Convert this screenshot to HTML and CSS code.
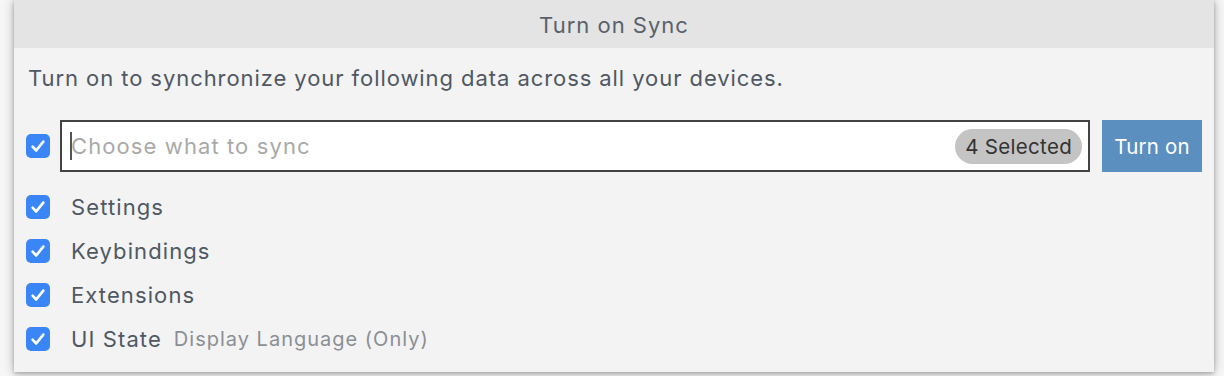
FILE: index.html
```html
<!DOCTYPE html>
<html>
<head>
<meta charset="utf-8">
<link rel="stylesheet" href="styles.css">
</head>
<body>
<div class="panel">
  <div class="title">Turn on Sync</div>
  <div class="content">
    <p class="desc">Turn on to synchronize your following data across all your devices.</p>
    <div class="picker">
      <span class="check"><svg viewBox="0 0 24 24" width="24" height="24"><path d="M6.6 12.6l3.6 3.9L17.3 7.6" fill="none" stroke="#fff" stroke-width="2.6" stroke-linecap="round" stroke-linejoin="round"/></svg></span>
      <div class="input">
        <span class="caret"></span>
        <span class="placeholder">Choose what to sync</span>
        <span class="badge">4 Selected</span>
      </div>
      <button class="btn">Turn on</button>
    </div>
    <ul class="list">
      <li class="item"><span class="check"><svg viewBox="0 0 24 24" width="24" height="24"><path d="M6.6 12.6l3.6 3.9L17.3 7.6" fill="none" stroke="#fff" stroke-width="2.6" stroke-linecap="round" stroke-linejoin="round"/></svg></span><span class="label">Settings</span></li>
      <li class="item"><span class="check"><svg viewBox="0 0 24 24" width="24" height="24"><path d="M6.6 12.6l3.6 3.9L17.3 7.6" fill="none" stroke="#fff" stroke-width="2.6" stroke-linecap="round" stroke-linejoin="round"/></svg></span><span class="label">Keybindings</span></li>
      <li class="item"><span class="check"><svg viewBox="0 0 24 24" width="24" height="24"><path d="M6.6 12.6l3.6 3.9L17.3 7.6" fill="none" stroke="#fff" stroke-width="2.6" stroke-linecap="round" stroke-linejoin="round"/></svg></span><span class="label">Extensions</span></li>
      <li class="item"><span class="check"><svg viewBox="0 0 24 24" width="24" height="24"><path d="M6.6 12.6l3.6 3.9L17.3 7.6" fill="none" stroke="#fff" stroke-width="2.6" stroke-linecap="round" stroke-linejoin="round"/></svg></span><span class="label">UI State</span><span class="detail">Display Language (Only)</span></li>
    </ul>
  </div>
</div>
</body>
</html>
```
FILE: styles.css
```css
* { box-sizing: border-box; }
html, body { margin: 0; padding: 0; }
body {
  background: #f6f6f6;
  font-family: Inter, "Noto Sans", "Liberation Sans", sans-serif;
  width: 1224px;
  height: 376px;
  overflow: hidden;
}
.panel {
  margin-left: 14px;
  width: 1200px;
  height: 372px;
  background: #f3f3f3;
  box-shadow: 0 0 10px rgba(0,0,0,0.28), 0 2px 4px rgba(0,0,0,0.2);
}
.title {
  height: 48px;
  padding-top: 1px;
  background: #e4e4e4;
  color: #59616b;
  font-size: 22px;
  letter-spacing: 1px;
  display: flex;
  align-items: center;
  justify-content: center;
}
.content { padding: 0 12px 0 12px; }
.desc {
  margin: 0;
  padding: 17px 0 0 2px;
  height: 72px;
  font-size: 22px;
  letter-spacing: 0.93px;
  color: #4f5863;
}
.picker {
  display: flex;
  align-items: center;
  height: 52px;
}
.check {
  width: 24px;
  height: 24px;
  border-radius: 5px;
  background: #3a86f7;
  display: inline-flex;
  flex: none;
}
.input {
  margin-left: 10px;
  width: 1030px;
  height: 52px;
  background: #fff;
  border: 2px solid #434343;
  display: flex;
  align-items: center;
  padding: 0 6px 0 8px;
}
.caret {
  width: 2px;
  height: 28px;
  background: #555;
}
.placeholder {
  flex: 1;
  color: #a9a9a9;
  font-size: 22px;
  letter-spacing: 1.1px;
  margin-left: -1px;
}
.badge {
  background: #c4c4c4;
  color: #333;
  font-size: 20.5px;
  letter-spacing: 0.3px;
  height: 35px;
  border-radius: 18px;
  padding: 0 10px;
  display: flex;
  align-items: center;
}
.btn {
  margin-left: 12px;
  width: 100px;
  height: 52px;
  border: none;
  background: #5a8fc0;
  color: #fff;
  font-family: inherit;
  font-size: 20.5px;
  letter-spacing: 0.2px;
  padding: 0;
}
.list {
  list-style: none;
  margin: 0;
  padding: 13px 0 0 0;
}
.item {
  display: flex;
  align-items: center;
  height: 44px;
}
.label {
  margin-left: 21px;
  font-size: 22px;
  letter-spacing: 1.1px;
  color: #4f5863;
}
.detail {
  margin-left: 12px;
  font-size: 20px;
  letter-spacing: 1px;
  color: #8a8f95;
}
```
